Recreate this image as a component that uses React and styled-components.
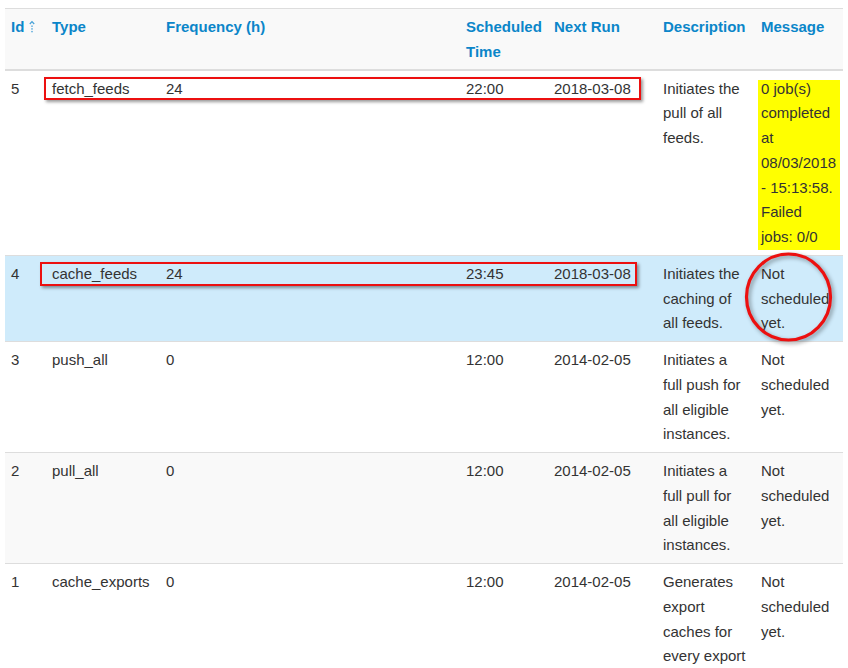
import React from "react";
import styled, { createGlobalStyle } from "styled-components";

const GlobalStyle = createGlobalStyle`
  body {
    margin: 0;
    background: #fff;
    font-family: "Liberation Sans", Arial, sans-serif;
  }
`;

const Page = styled.div`
  padding: 8px 5px 0 5px;
`;

const Frame = styled.div`
  position: relative;
  width: 838px;
`;

const Table = styled.table`
  width: 838px;
  table-layout: fixed;
  border-collapse: collapse;
  border-top: 1px solid #dddddd;
  font-size: 15px;
  line-height: 24.75px;
  color: #333333;
`;

const HeadRow = styled.tr`
  background: #f9f9f9;
`;

const HeadCell = styled.th`
  box-sizing: border-box;
  width: ${(p) => p.$w}px;
  padding: 6px 6px 4px 6px;
  text-align: left;
  vertical-align: top;
  font-weight: bold;
  color: #0b86c9;
  border-bottom: 2px solid #dddddd;
`;

const SortIcon = styled.svg`
  margin-left: 5px;
  vertical-align: -1px;
`;

const Row = styled.tr`
  background: ${(p) =>
    p.$tone === "info" ? "#cfebfb" : p.$tone === "stripe" ? "#f9f9f9" : "#ffffff"};
`;

const Cell = styled.td`
  padding: 6px 6px 5px 6px;
  vertical-align: top;
  border-top: 1px solid #dddddd;
`;

const Notice = styled.div`
  margin: 0 -3px;
  padding: 0 3px;
  background: linear-gradient(#ffff00, #ffff00) 0 3px / 100% calc(100% - 3px) no-repeat;
`;

const Marker = styled.div`
  position: absolute;
  top: ${(p) => p.$top}px;
  left: ${(p) => p.$left}px;
  width: 597px;
  height: ${(p) => p.$h}px;
  box-sizing: border-box;
  border: 2px solid #ec1010;
  box-shadow: 2px 2px 3px rgba(0, 0, 0, 0.4);
  pointer-events: none;
`;

const Ring = styled.svg`
  position: absolute;
  top: 244px;
  left: 739px;
  overflow: visible;
  filter: drop-shadow(2px 2px 2px rgba(0, 0, 0, 0.4));
  pointer-events: none;
`;

const columns = [
  { label: "Id", w: 41, sort: true },
  { label: "Type", w: 114 },
  { label: "Frequency (h)", w: 300 },
  { label: "Scheduled Time", w: 88 },
  { label: "Next Run", w: 109 },
  { label: "Description", w: 98 },
  { label: "Message", w: 88 },
];

const jobs = [
  {
    id: 5,
    type: "fetch_feeds",
    freq: "24",
    time: "22:00",
    next: "2018-03-08",
    desc: "Initiates the pull of all feeds.",
    msg: "0 job(s) completed at 08/03/2018 - 15:13:58. Failed jobs: 0/0",
    notice: true,
  },
  {
    id: 4,
    type: "cache_feeds",
    freq: "24",
    time: "23:45",
    next: "2018-03-08",
    desc: "Initiates the caching of all feeds.",
    msg: "Not scheduled yet.",
    tone: "info",
  },
  {
    id: 3,
    type: "push_all",
    freq: "0",
    time: "12:00",
    next: "2014-02-05",
    desc: "Initiates a full push for all eligible instances.",
    msg: "Not scheduled yet.",
  },
  {
    id: 2,
    type: "pull_all",
    freq: "0",
    time: "12:00",
    next: "2014-02-05",
    desc: "Initiates a full pull for all eligible instances.",
    msg: "Not scheduled yet.",
    tone: "stripe",
  },
  {
    id: 1,
    type: "cache_exports",
    freq: "0",
    time: "12:00",
    next: "2014-02-05",
    desc: "Generates export caches for every export type and for every organisation.",
    msg: "Not scheduled yet.",
  },
];

const App = () => {
  return (
    <Page>
      <GlobalStyle />
      <Frame>
        <Table>
          <thead>
            <HeadRow>
              {columns.map((c) => (
                <HeadCell key={c.label} $w={c.w}>
                  {c.label}
                  {c.sort && (
                    <SortIcon width="6" height="13" viewBox="0 0 6 13">
                      <polyline
                        points="0.8,4 3,1.6 5.2,4"
                        fill="none"
                        stroke="#4aa3d9"
                        strokeWidth="1.3"
                      />
                      <rect x="2.3" y="5.5" width="1.4" height="1.4" fill="#4aa3d9" />
                      <rect x="2.3" y="8.2" width="1.4" height="1.4" fill="#4aa3d9" />
                      <rect x="2.3" y="10.9" width="1.4" height="1.4" fill="#4aa3d9" />
                    </SortIcon>
                  )}
                </HeadCell>
              ))}
            </HeadRow>
          </thead>
          <tbody>
            {jobs.map((j) => (
              <Row key={j.id} $tone={j.tone}>
                <Cell>{j.id}</Cell>
                <Cell>{j.type}</Cell>
                <Cell>{j.freq}</Cell>
                <Cell>{j.time}</Cell>
                <Cell>{j.next}</Cell>
                <Cell>{j.desc}</Cell>
                <Cell>{j.notice ? <Notice>{j.msg}</Notice> : j.msg}</Cell>
              </Row>
            ))}
          </tbody>
        </Table>
        <Marker $top={69} $left={39} $h={23} />
        <Marker $top={254} $left={35} $h={24} />
        <Ring width="90" height="92" viewBox="0 0 90 92">
          <ellipse
            cx="44.5"
            cy="45"
            rx="42"
            ry="43"
            fill="none"
            stroke="#ec1010"
            strokeWidth="3.2"
          />
        </Ring>
      </Frame>
    </Page>
  );
};

export default App;
